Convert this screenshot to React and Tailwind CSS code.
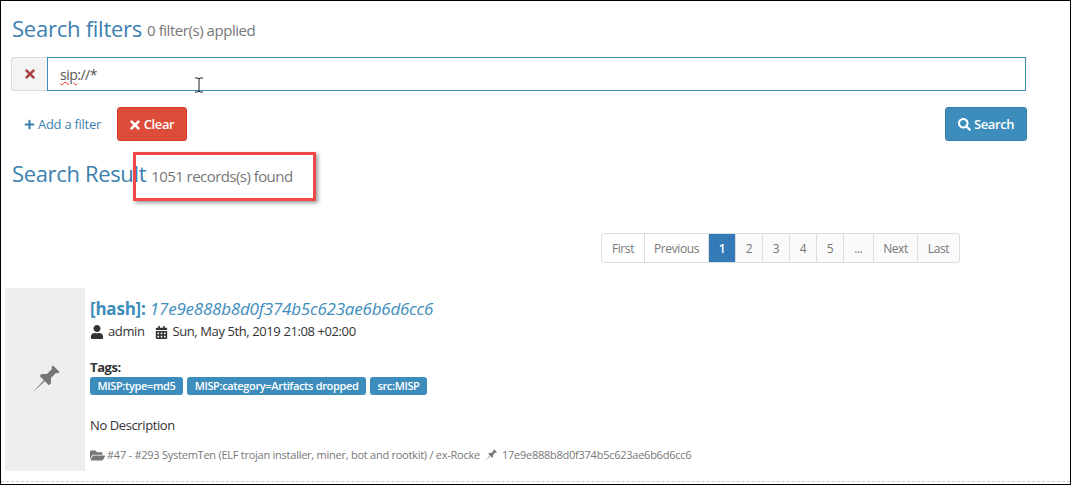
import React from 'react';
import { FaTimes, FaPlus, FaSearch, FaUser, FaCalendarAlt, FaFolderOpen } from 'react-icons/fa';

const font = "font-['Open_Sans','Noto_Sans',sans-serif]";

function Pin({ className }) {
  return (
    <svg className={className} viewBox="0 0 32 32" fill="currentColor">
      <g transform="rotate(45 16 16)">
        <path d="M11 -1h10v2l-2 1.500v7.500l4 4v3H9v-3l4-4V2.500L11 1z" />
        <path d="M15.200 17h1.600L16 35z" />
      </g>
    </svg>
  );
}

function PageBtn({ children, active, first, last, w, muted }) {
  return (
    <div className={`flex h-[30px] items-center justify-center border border-[#ddd] pt-px text-[12px] tracking-[-0.4px] -ml-px ${w} ${active ? 'bg-[#337ab7] border-[#337ab7] text-white font-semibold' : muted ? 'bg-[#fafafa] text-[#777]' : 'bg-white text-[#777]'} ${first ? 'rounded-l-[3px] ml-0' : ''} ${last ? 'rounded-r-[3px]' : ''}`}>
      {children}
    </div>
  );
}

function Tag({ children, w }) {
  return (
    <span className={`flex h-[18px] items-center justify-center rounded-[3px] bg-[#3c8dbc] text-[11px] font-semibold tracking-[-0.35px] text-white ${w}`}>
      {children}
    </span>
  );
}

export default function App() {
  return (
    <div className={`relative h-[485px] w-[1071px] overflow-hidden border border-black bg-white ${font}`}>
      <div className="flex h-[56px] items-start pl-[11px] pt-[12px]">
        <h2 className="text-[22px] leading-[30px] tracking-[-0.25px] text-[#3c7fb0]">Search filters</h2>
        <span className="ml-[5px] mt-[7px] text-[15px] leading-[20px] tracking-[-0.45px] text-[#777]">0 filter(s) applied</span>
      </div>

      <div className="ml-[10px] flex h-[34px] w-[1015px]">
        <div className="flex w-[36px] items-center justify-center rounded-l-[3px] border border-r-0 border-[#ddd] bg-[#f4f4f4] text-[14px] text-[#a94442]">
          <FaTimes />
        </div>
        <div className="flex flex-1 items-center border border-[#3c8dbc] pl-[12px] text-[14px] tracking-[-0.5px] text-[#555]">
          <span className="underline decoration-wavy decoration-[#e33] decoration-1">sip</span>://*
        </div>
      </div>

      <div className="ml-[10px] mt-[16px] flex h-[34px] w-[1016px] items-center">
        <div className="ml-[13px] flex w-[78px] items-center gap-[3px] pt-px text-[13px] tracking-[-0.28px] text-[#3c7fb0]">
          <FaPlus className="shrink-0 text-[11px]" />
          <span className="whitespace-nowrap">Add a filter</span>
        </div>
        <div className="ml-[15px] flex h-[34px] w-[70px] items-center justify-center gap-[2px] rounded-[3px] border border-[#d73925] bg-[#dd4b39] pr-[2px] pt-px text-[13px] font-semibold tracking-[-0.4px] text-white">
          <FaTimes className="text-[14px]" />
          Clear
        </div>
        <div className="ml-auto flex h-[34px] w-[82px] items-center justify-center gap-[3px] rounded-[3px] border border-[#367fa9] bg-[#3c8dbc] pt-px text-[13px] font-semibold tracking-[-0.4px] text-white">
          <FaSearch className="text-[13px]" />
          Search
        </div>
      </div>

      <div className="mt-[17px] flex h-[34px] items-start pl-[11px]">
        <h2 className="text-[22px] leading-[30px] tracking-[-0.35px] text-[#3c7fb0]">Search Result</h2>
        <span className="ml-[5px] mt-[8px] text-[15px] leading-[20px] tracking-[-0.55px] text-[#777]">1051 records(s) found</span>
      </div>

      <div className="mt-[41px] flex h-[30px] pl-[600px]">
        <PageBtn first w="w-[44px]">First</PageBtn>
        <PageBtn w="w-[65px]">Previous</PageBtn>
        <PageBtn active w="w-[28px]">1</PageBtn>
        <PageBtn muted w="w-[28px]">2</PageBtn>
        <PageBtn muted w="w-[28px]">3</PageBtn>
        <PageBtn muted w="w-[28px]">4</PageBtn>
        <PageBtn muted w="w-[28px]">5</PageBtn>
        <PageBtn muted w="w-[31px]">...</PageBtn>
        <PageBtn muted w="w-[45px]">Next</PageBtn>
        <PageBtn muted last w="w-[43px]">Last</PageBtn>
      </div>

      <div className="mt-[25px] flex pl-[4px]">
        <div className="flex h-[183px] w-[80px] shrink-0 items-center justify-center bg-[#eee] pr-[1px] text-[#757575]">
          <Pin className="h-[30px] w-[30px]" />
        </div>
        <div className="ml-[5px] flex h-[183px] flex-col">
          <div className="mt-[9px] h-[24px] whitespace-nowrap text-[17px] leading-[24px] tracking-[-0.22px] text-[#3c8dbc]">
            <span className="font-bold">[hash]:</span> <em>17e9e888b8d0f374b5c623ae6b6d6cc6</em>
          </div>
          <div className="mt-[1px] flex h-[20px] items-center text-[13px] tracking-[-0.4px] text-[#333]">
            <FaUser className="mr-[4px] text-[14px]" />
            <span>admin</span>
            <FaCalendarAlt className="ml-[11px] mr-[4px] text-[13px]" />
            <span>Sun, May 5th, 2019 21:08 +02:00</span>
          </div>
          <div className="mt-[16px] h-[18px] text-[13px] font-bold leading-[18px] tracking-[-0.4px] text-[#333]">Tags:</div>
          <div className="mt-[1px] flex gap-[4px]">
            <Tag w="w-[93px]">MISP:type=md5</Tag>
            <Tag w="w-[179px]">MISP:category=Artifacts dropped</Tag>
            <Tag w="w-[57px]">src:MISP</Tag>
          </div>
          <div className="mt-[20px] h-[20px] text-[13px] leading-[20px] tracking-[-0.4px] text-[#333]">No Description</div>
          <div className="mt-[11px] flex h-[18px] items-center whitespace-nowrap text-[11px] tracking-[-0.25px] text-[#777]">
            <FaFolderOpen className="mr-[2px] text-[15px]" />
            <span>#47 - #293 SystemTen (ELF trojan installer, miner, bot and rootkit) / ex-Rocke</span>
            <Pin className="ml-[4px] mr-[5px] h-[13px] w-[13px]" />
            <span>17e9e888b8d0f374b5c623ae6b6d6cc6</span>
          </div>
        </div>
      </div>

      <div className="mt-[10px] border-t border-dashed border-[#ccc]" />

      <div className="absolute left-[132px] top-[151px] h-[49px] w-[183px] border-[3px] border-[#f04848] shadow-[2px_2px_4px_rgba(0,0,0,0.4)]" />
      <svg className="absolute left-[192px] top-[76px]" width="12" height="16" viewBox="0 0 12 16" fill="none" stroke="#222" strokeWidth="1">
        <path d="M2 1h3l1 1 1-1h3M6 2v12M2 15h3l1-1 1 1h3" />
      </svg>
    </div>
  );
}
